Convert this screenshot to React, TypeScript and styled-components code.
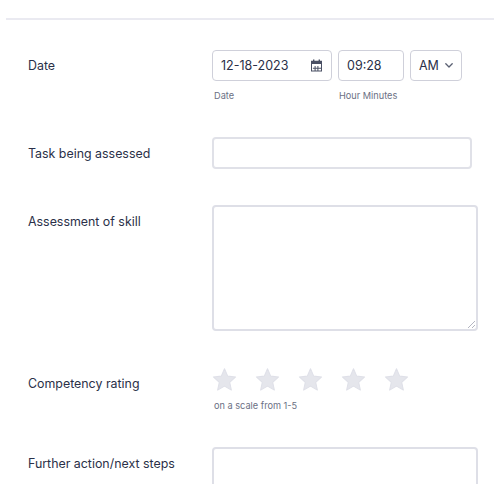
import React from 'react';
import styled, { createGlobalStyle } from 'styled-components';

const GlobalStyle = createGlobalStyle`
  html, body {
    margin: 0;
    height: 484px;
    overflow: hidden;
    background: #fff;
    font-family: Inter, "Liberation Sans", sans-serif;
    color: #2a3048;
  }
`;

const App = () => {
  return (
    <>
      <GlobalStyle />
      <Page>
        <Form>
          <Row $height={117} $top={30}>
            <Label $top={8}>Date</Label>
            <div>
              <Fields>
                <Box $width={120}>
                  <span>12-18-2023</span>
                  <CalendarIcon />
                </Box>
                <Box $width={66}>
                  <span>09:28</span>
                </Box>
                <Box $width={52}>
                  <span>AM</span>
                  <Chevron />
                </Box>
              </Fields>
              <Captions>
                <Caption $width={125}>Date</Caption>
                <Caption>Hour Minutes</Caption>
              </Captions>
            </div>
          </Row>

          <Row $height={68}>
            <Label $top={9}>Task being assessed</Label>
            <Input $width={260} $height={32} />
          </Row>

          <Row $height={163}>
            <Label $top={9}>Assessment of skill</Label>
            <TextArea $height={126}>
              <Grip />
            </TextArea>
          </Row>

          <Row $height={79}>
            <Label $top={8}>Competency rating</Label>
            <div>
              <Stars>
                {[0, 1, 2, 3, 4].map((i) => (
                  <Star key={i} />
                ))}
              </Stars>
              <ScaleCaption>on a scale from 1-5</ScaleCaption>
            </div>
          </Row>

          <Row $height={60}>
            <Label $top={9}>Further action/next steps</Label>
            <TextArea $height={80} />
          </Row>
        </Form>
      </Page>
    </>
  );
};

export default App;

const CalendarIcon = () => (
  <svg width="13" height="13" viewBox="0 0 13 13" fill="#4a5064">
    <rect x="3" y="0.5" width="1.4" height="2.5" />
    <rect x="8.6" y="0.5" width="1.4" height="2.5" />
    <path d="M1 1.8h11v10.7H1z M2 5v6.5h2.6V9.7H2.9V8.7h1.7V7h1v1.7h1.8V7h1v1.7H11V5z M5.6 9.7v1.8h1.8V9.7z M8.4 9.7v1.8H11V9.7z" fillRule="evenodd" />
  </svg>
);

const Chevron = () => (
  <svg width="8" height="5" viewBox="0 0 8 5" fill="none" stroke="#5a6072" strokeWidth="1.3" strokeLinecap="round" strokeLinejoin="round">
    <path d="M0.8 0.8 4 4l3.2-3.2" />
  </svg>
);

const Star = () => (
  <svg width="25" height="25" viewBox="0 1 24 24" fill="#e5e6ec" stroke="#dfe0e8" strokeWidth="1" strokeLinejoin="round">
    <path d="M12 1.8l3.1 7 7.6.8-5.7 5.1 1.6 7.5L12 18.4l-6.6 3.8 1.6-7.5-5.7-5.1 7.6-.8z" />
  </svg>
);

const Page = styled.div`
  padding: 18px 6px 0;
`;

const Form = styled.div`
  border-top: 2px solid #eaeaf1;
  padding: 0 0 0 22px;
  height: 466px;
  overflow: hidden;
`;

const Row = styled.div<{ $height: number; $top?: number }>`
  box-sizing: border-box;
  display: grid;
  grid-template-columns: 184px 1fr;
  height: ${(p) => p.$height}px;
  padding-top: ${(p) => p.$top || 0}px;
`;

const Label = styled.div<{ $top: number }>`
  padding-top: ${(p) => p.$top}px;
  font-size: 12.4px;
  line-height: 16px;
  font-weight: 440;
  color: #2a3048;
`;

const Fields = styled.div`
  display: flex;
  gap: 6px;
`;

const Box = styled.div<{ $width: number }>`
  box-sizing: border-box;
  width: ${(p) => p.$width}px;
  height: 31px;
  padding: 0 8px;
  display: flex;
  align-items: center;
  justify-content: space-between;
  border: 1px solid #cfd0da;
  border-radius: 4px;
  font-size: 12.5px;
  color: #2a3048;
`;

const Captions = styled.div`
  display: flex;
  padding: 9px 0 0 2px;
`;

const Caption = styled.div<{ $width?: number }>`
  width: ${(p) => (p.$width ? `${p.$width}px` : 'auto')};
  font-size: 9.2px;
  line-height: 12px;
  color: #6b7084;
`;

const Input = styled.div<{ $width: number; $height: number }>`
  box-sizing: border-box;
  width: ${(p) => p.$width}px;
  height: ${(p) => p.$height}px;
  border: 2px solid #e0e1e8;
  border-radius: 4px;
`;

const TextArea = styled.div<{ $height: number }>`
  position: relative;
  box-sizing: border-box;
  width: 266px;
  height: ${(p) => p.$height}px;
  border: 2px solid #dedfe7;
  border-radius: 4px;
`;

const Grip = styled.div`
  position: absolute;
  right: 1px;
  bottom: 1px;
  width: 7px;
  height: 7px;
  background: linear-gradient(
    135deg,
    transparent 45%,
    #b4b6c2 45%,
    #b4b6c2 55%,
    transparent 55%,
    transparent 72%,
    #b4b6c2 72%,
    #b4b6c2 82%,
    transparent 82%
  );
`;

const Stars = styled.div`
  display: flex;
  gap: 18px;
`;

const ScaleCaption = styled.div`
  padding: 7px 0 0 2px;
  font-size: 9.2px;
  line-height: 12px;
  color: #6b7084;
`;
